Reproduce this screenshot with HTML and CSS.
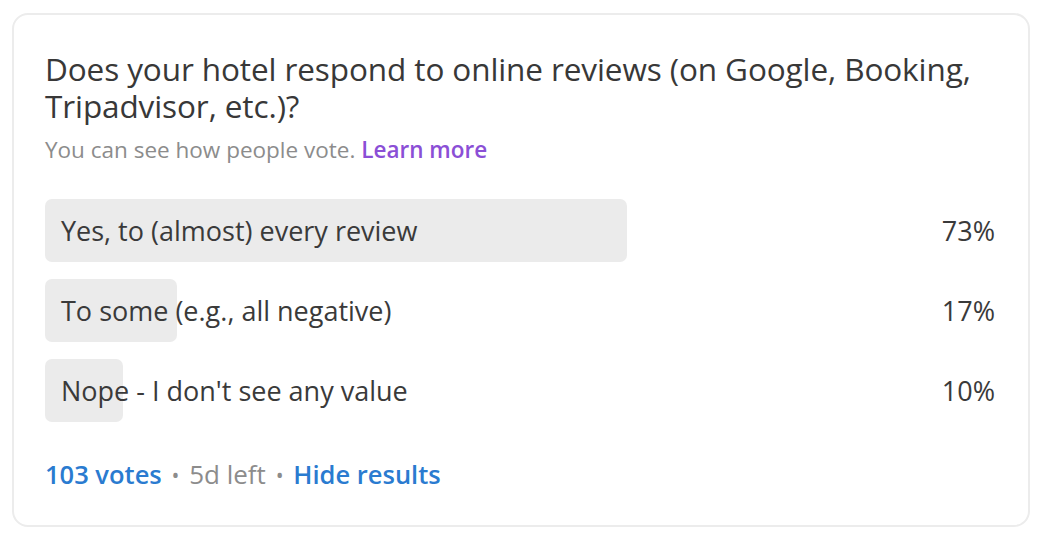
FILE: index.html
```html
<!DOCTYPE html>
<html>
<head>
<meta charset="utf-8">
<link rel="stylesheet" href="styles.css">
</head>
<body>
<div class="card">
  <h1 class="title">Does your hotel respond to online reviews (on Google, Booking, Tripadvisor, etc.)?</h1>
  <p class="sub">You can see how people vote. <a class="learn">Learn more</a></p>
  <div class="options">
    <div class="row">
      <div class="track"><div class="fill" style="width:73%"></div><span class="label">Yes, to (almost) every review</span></div>
      <span class="pct">73%</span>
    </div>
    <div class="row">
      <div class="track"><div class="fill" style="width:16.6%"></div><span class="label">To some (e.g., all negative)</span></div>
      <span class="pct">17%</span>
    </div>
    <div class="row">
      <div class="track"><div class="fill" style="width:9.8%"></div><span class="label">Nope - I don't see any value</span></div>
      <span class="pct">10%</span>
    </div>
  </div>
  <p class="foot"><a class="blue">103 votes</a> <span class="dot">•</span> 5d left <span class="dot">•</span> <a class="blue">Hide results</a></p>
</div>
</body>
</html>
```
FILE: styles.css
```css
html, body { margin: 0; padding: 0; background: #ffffff; }
body {
  font-family: "Open Sans", "Noto Sans", sans-serif;
  padding: 13px 12px 13px 12px;
}
.card {
  box-sizing: border-box;
  width: 1018px;
  height: 514px;
  border: 2px solid #ececec;
  border-radius: 16px;
  padding: 35px 33px 0 31px;
}
.title {
  margin: 0;
  font-size: 31.5px;
  font-weight: 400;
  line-height: 37px;
  color: #383838;
  letter-spacing: -0.1px;
}
.sub {
  margin: 11px 0 0 0;
  font-size: 22.5px;
  line-height: 30px;
  color: #8c8c8c;
}
.learn { color: #8b4fd6; font-weight: 600; }
.options {
  margin-top: 34px;
  display: flex;
  flex-direction: column;
  gap: 17px;
}
.row {
  display: flex;
  align-items: center;
  height: 63px;
}
.track {
  position: relative;
  width: 797px;
  height: 63px;
  display: flex;
  align-items: center;
}
.fill {
  position: absolute;
  left: 0; top: 0; bottom: 0;
  background: #ebebeb;
  border-radius: 7px;
}
.label {
  position: relative;
  padding-left: 16px;
  font-size: 27px;
  color: #3a3a3a;
}
.pct {
  flex: 1;
  text-align: right;
  font-size: 27px;
  color: #3a3a3a;
}
.foot {
  margin: 37px 0 0 0;
  font-size: 26px;
  line-height: 30px;
  color: #8c8c8c;
}
.blue { color: #2a7bd0; font-weight: 600; font-size: 25.5px; }
.dot { font-size: 21px; padding: 0 3px; vertical-align: 1px; }
```
